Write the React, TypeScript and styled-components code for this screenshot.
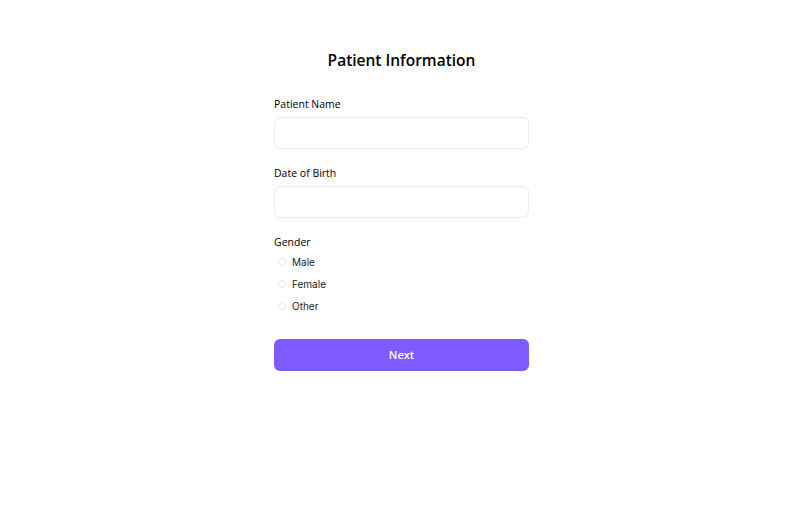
import React from 'react'
import styled, { createGlobalStyle } from 'styled-components'

const GlobalStyle = createGlobalStyle`
  body {
    margin: 0;
    background: #ffffff;
    font-family: "Open Sans", "Liberation Sans", sans-serif;
    color: #000000;
  }
`
const Page = styled.div`
  display: flex;
  justify-content: center;
  padding: 48px 0 0 3px;
`
const Form = styled.form`
  width: 255px;
  display: flex;
  flex-direction: column;
`
const Title = styled.h1`
  margin: 0 0 24px;
  font-size: 15.5px;
  line-height: 24px;
  font-weight: 600;
  text-align: center;
  color: #000000;
`
const Field = styled.div`
  display: flex;
  flex-direction: column;
  margin-bottom: 16px;
`
const Label = styled.label`
  font-size: 10.5px;
  line-height: 16px;
  font-weight: 400;
  color: #000000;
  margin-bottom: 5px;
`
const Input = styled.input`
  height: 32px;
  box-sizing: border-box;
  border: 1px solid #ebebeb;
  border-radius: 6px;
  padding: 0 10px;
  font-family: inherit;
  font-size: 11px;
  outline: none;
`
const RadioGroup = styled.div`
  display: flex;
  flex-direction: column;
  gap: 6px;
  margin-top: -1px;
  padding-left: 4px;
`
const RadioRow = styled.label`
  display: flex;
  align-items: center;
  gap: 6px;
  height: 16px;
  font-family: Inter, "Liberation Sans", sans-serif;
  font-size: 10px;
  color: #222222;
`
const RadioDot = styled.span`
  width: 8px;
  height: 8px;
  border-radius: 50%;
  border: 1px solid #e6e6e6;
  box-sizing: border-box;
`
const Button = styled.button`
  margin-top: 9px;
  height: 32px;
  padding: 0 0 2px;
  border: none;
  border-radius: 6px;
  background: #7f5bff;
  color: #ffffff;
  font-family: inherit;
  font-size: 11px;
  font-weight: 600;
`

export default function App() {
  return (
    <>
      <GlobalStyle />
      <Page>
        <Form onSubmit={(e) => e.preventDefault()}>
          <Title>Patient Information</Title>
          <Field>
            <Label>Patient Name</Label>
            <Input />
          </Field>
          <Field>
            <Label>Date of Birth</Label>
            <Input />
          </Field>
          <Field>
            <Label>Gender</Label>
            <RadioGroup>
              {['Male', 'Female', 'Other'].map((g) => (
                <RadioRow key={g}>
                  <RadioDot />
                  {g}
                </RadioRow>
              ))}
            </RadioGroup>
          </Field>
          <Button type="submit">Next</Button>
        </Form>
      </Page>
    </>
  )
}
